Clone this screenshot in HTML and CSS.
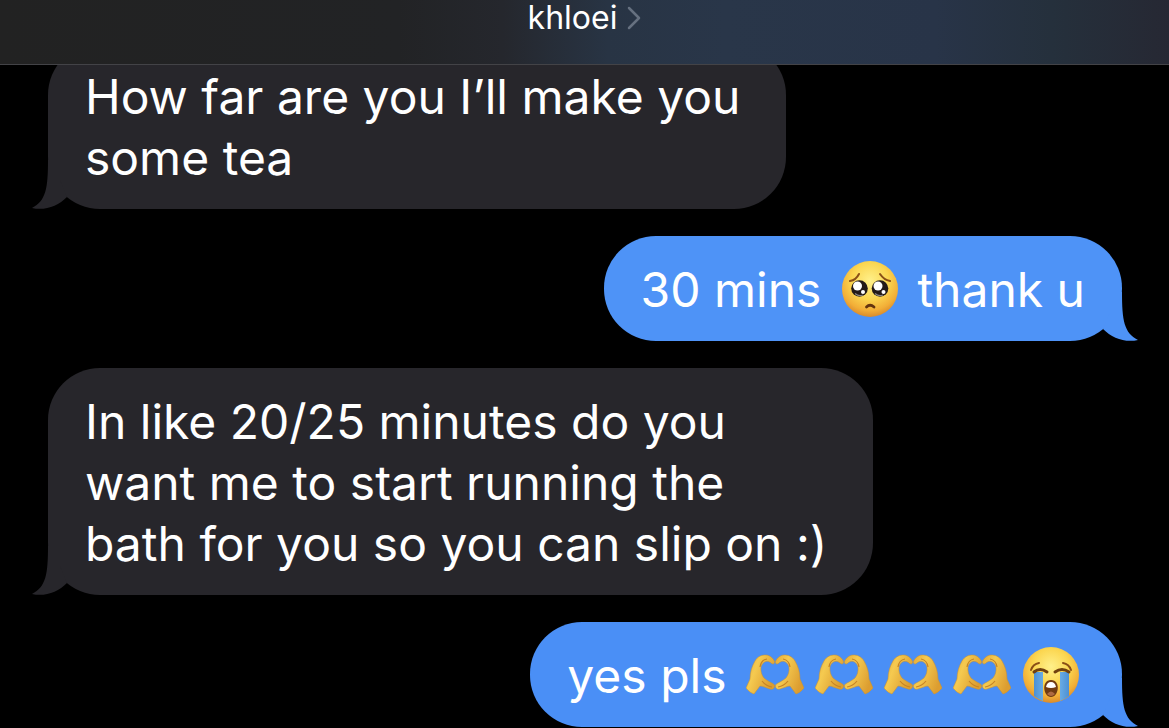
FILE: index.html
```
<!DOCTYPE html>
<html lang="en">
<head>
	<meta charset="UTF-8">
	<meta name="viewport" content="width=device-width, initial-scale=1">
	<title>khloei</title>
	<link rel="stylesheet" href="styles.css">
</head>
<body>
	<svg class="defs" aria-hidden="true">
		<defs>
			<radialGradient id="face" cx="50%" cy="35%" r="65%">
				<stop offset="0" stop-color="#fff08a"/>
				<stop offset="0.5" stop-color="#fbd650"/>
				<stop offset="0.82" stop-color="#f2ae37"/>
				<stop offset="1" stop-color="#d98a2c"/>
			</radialGradient>
			<linearGradient id="tears" x1="0" y1="0" x2="1" y2="0">
				<stop offset="0" stop-color="#4c90d4"/>
				<stop offset="0.5" stop-color="#84c4f3"/>
				<stop offset="1" stop-color="#4c90d4"/>
			</linearGradient>
			<linearGradient id="hand" x1="0" y1="0" x2="1" y2="0.5">
				<stop offset="0" stop-color="#e5aa35"/>
				<stop offset="0.4" stop-color="#f5ca50"/>
				<stop offset="1" stop-color="#dc9d30"/>
			</linearGradient>
		</defs>
		<symbol id="tail" viewBox="0 0 36 49">
			<path d="M16 0C16 28 14 41 0 48C13 51 26 46 35 37L28 20V0Z"/>
		</symbol>
		<symbol id="pleading" viewBox="0 0 58 58">
			<circle cx="29" cy="29" r="28" fill="url(#face)"/>
			<path d="M9 21Q15 20 18 14M39 14Q43 20 49 21" fill="none" stroke="#8a4f16" stroke-width="2" stroke-linecap="round"/>
			<circle cx="18.500" cy="28.500" r="8.300" fill="#241a18"/>
			<circle cx="39" cy="28.500" r="8.300" fill="#241a18"/>
			<circle cx="16.500" cy="26" r="4.500" fill="#fff"/>
			<circle cx="37" cy="26" r="4.500" fill="#fff"/>
			<circle cx="22" cy="32" r="2" fill="#fff"/>
			<circle cx="42.500" cy="32" r="2" fill="#fff"/>
			<path d="M14 33.500Q18 37 22 35M34 33.500Q38 37 42 35" fill="none" stroke="#8b8684" stroke-width="1.200"/>
			<path d="M25.500 47Q29 43.500 33 47" fill="none" stroke="#64340f" stroke-width="2.800" stroke-linecap="round"/>
		</symbol>
		<symbol id="crying" viewBox="0 0 58 58">
			<circle cx="29" cy="29" r="28" fill="url(#face)"/>
			<path d="M12 26H21V55Q16 53 12 50ZM38 26H47V50Q43 53 38 55Z" fill="url(#tears)"/>
			<path d="M9 24Q11 18 17 17M41 17Q47 18 49 24" fill="none" stroke="#8a4f16" stroke-width="2" stroke-linecap="round"/>
			<path d="M12 26Q18 21 25 26M33 26Q40 21 47 26" fill="none" stroke="#70400f" stroke-width="3" stroke-linecap="round"/>
			<path d="M29 34C19 34 21 51 29 51S39 34 29 34Z" fill="#703b12"/>
			<path d="M24 41Q25 36 29 36T34 41Q29 43 24 41Z" fill="#fff"/>
			<path d="M25 48Q29 43 33 48Q29 52 25 48Z" fill="#ae6a42"/>
		</symbol>
		<symbol id="heart-hands" viewBox="0 0 58 58">
			<path d="M0 42L4 33C4 26 6 20 9 15C12 10 16 9 20 9C24 9 28 13 28.600 16C28.600 18.500 26 18.500 24.500 16.500C20 13.500 16 17 15 21C14.500 25 15.500 29 18 32C21 35 27 37 28.600 39C29 42 27 44 24 43C20 42 17 40 14 40L8 48Q4 47 0 42Z" fill="url(#hand)" stroke="#cf9029" stroke-width="0.500"/>
			<path d="M58 42L54 33C54 26 52 20 49 15C46 10 42 9 38 9C34 9 30 13 29.400 16C29.400 18.500 32 18.500 33.500 16.500C38 13.500 42 17 43 21C43.500 25 42.500 29 40 32C37 35 31 37 29.400 39C29 42 31 44 34 43C38 42 41 40 44 40L50 48Q54 47 58 42Z" fill="url(#hand)" stroke="#cf9029" stroke-width="0.500"/>
			<path d="M14 21Q15 14 21 13M44 21Q43 14 37 13M16 35Q20 40 26 41M42 35Q38 40 32 41" fill="none" stroke="#c88425" stroke-width="1.200"/>
		</symbol>
	</svg>

	<header class="header">
		<a class="header__contact" href="#">
			<span>khloei</span>
			<svg class="header__chevron" viewBox="0 0 14 24" aria-hidden="true"><path d="M2 2L12 12L2 22"/></svg>
		</a>
	</header>

	<main class="chat">
		<div class="bubble bubble--in">
			How far are you I’ll make you<br>some tea
			<svg class="bubble__tail"><use href="#tail"/></svg>
		</div>
		<div class="bubble bubble--out">
			30 mins <svg class="emoji" role="img" aria-label="pleading face"><use href="#pleading"/></svg> thank u
			<svg class="bubble__tail"><use href="#tail"/></svg>
		</div>
		<div class="bubble bubble--in">
			In like 20/25 minutes do you<br>want me to start running the<br>bath for you so you can slip on :)
			<svg class="bubble__tail"><use href="#tail"/></svg>
		</div>
		<div class="bubble bubble--out bubble--last">
			yes pls <svg class="emoji" role="img" aria-label="heart hands"><use href="#heart-hands"/></svg><svg class="emoji" role="img" aria-label="heart hands"><use href="#heart-hands"/></svg><svg class="emoji" role="img" aria-label="heart hands"><use href="#heart-hands"/></svg><svg class="emoji" role="img" aria-label="heart hands"><use href="#heart-hands"/></svg><svg class="emoji" role="img" aria-label="loudly crying face"><use href="#crying"/></svg>
			<svg class="bubble__tail"><use href="#tail"/></svg>
		</div>
	</main>
</body>
</html>
```
FILE: styles.css
```
body {
	margin: 0;
	background: #000;
	color: #fff;
	font-family: Inter, "Liberation Sans", sans-serif;
	font-size: 48px;
	line-height: 61px;
}

.defs {
	display: block;
	width: 0;
	height: 0;
}

.header {
	position: sticky;
	top: 0;
	z-index: 1;
	box-sizing: border-box;
	height: 65px;
	border-bottom: 1px solid #434347;
	background: linear-gradient(90deg, #222 0%, #222325 34%, #25272d 43%, #283444 52%, #293649 62%, #283448 80%, #25303c 90%, #262833 100%);
	text-align: center;
}
.header__contact {
	display: inline-flex;
	align-items: center;
	gap: 10px;
	color: #fff;
	font-size: 32px;
	line-height: 36px;
	text-decoration: none;
	vertical-align: top;
}
.header__chevron {
	width: 14px;
	height: 24px;
	fill: none;
	stroke: #667180;
	stroke-width: 2.5;
	stroke-linecap: round;
	stroke-linejoin: round;
}

/* first message is partly scrolled under the header */
.chat {
	display: flex;
	flex-direction: column;
	gap: 27px;
	margin-top: -22px;
	padding: 0 47px 0 48px;
}

.bubble {
	position: relative;
	padding: 23px 37px 21px;
	border-radius: 52px;
}
.bubble--in {
	align-self: flex-start;
	padding-right: 46px;
	background: #27262b;
	fill: #27262b;
}
.bubble--out {
	align-self: flex-end;
	background: #4e93f7;
	fill: #4e93f7;
}
.bubble--last {
	background: #4a8ff6;
	fill: #4a8ff6;
}

.bubble__tail {
	position: absolute;
	bottom: 0;
	left: -16px;
	width: 36px;
	height: 49px;
}
.bubble--out .bubble__tail {
	left: auto;
	right: -16px;
	transform: scaleX(-1);
}

/* negative block margins keep the line at its normal height */
.emoji {
	width: 58px;
	height: 58px;
	margin: -6px 5px -6px 6px;
	vertical-align: -5px;
}
```
